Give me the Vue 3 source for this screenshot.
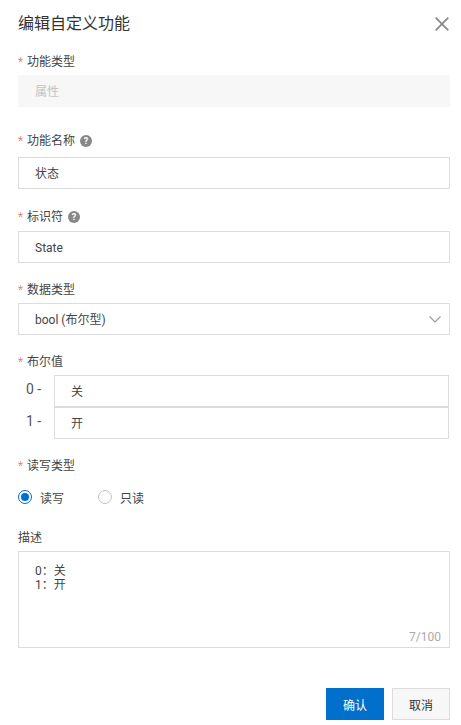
<template>
  <div class="dialog">
    <header class="dialog-header">
      <h2 class="dialog-title">编辑自定义功能</h2>
      <svg class="close-icon" width="14" height="14" viewBox="0 0 14 14">
        <path d="M0.7 0.7 L13.3 13.3 M13.3 0.7 L0.7 13.3" stroke="#8a8a8a" stroke-width="1.8" fill="none" />
      </svg>
    </header>

    <div class="form-item type-item">
      <label class="form-label"><span class="req">*</span>功能类型</label>
      <div class="input disabled">属性</div>
    </div>

    <div class="form-item name-item">
      <label class="form-label">
        <span class="req">*</span>功能名称
        <span class="help">?</span>
      </label>
      <div class="input">状态</div>
    </div>

    <div class="form-item id-item">
      <label class="form-label">
        <span class="req">*</span>标识符
        <span class="help">?</span>
      </label>
      <div class="input">State</div>
    </div>

    <div class="form-item">
      <label class="form-label"><span class="req">*</span>数据类型</label>
      <div class="input select">
        <span class="select-value">bool (布尔型)</span>
        <svg width="12" height="7" viewBox="0 0 12 7">
          <path d="M0.5 0.5 L6 6 L11.5 0.5" stroke="#999" stroke-width="1.1" fill="none" />
        </svg>
      </div>
    </div>

    <div class="form-item">
      <label class="form-label"><span class="req">*</span>布尔值</label>
      <div v-for="row in boolRows" :key="row.value" class="bool-row">
        <span class="bool-key">{{ row.value }} -</span>
        <div class="input bool-input">{{ row.label }}</div>
      </div>
    </div>

    <div class="form-item rw-item">
      <label class="form-label"><span class="req">*</span>读写类型</label>
      <div class="radio-group">
        <span class="radio checked"><i class="radio-dot"></i></span>
        <span class="radio-text">读写</span>
        <span class="radio"></span>
        <span class="radio-text">只读</span>
      </div>
    </div>

    <div class="form-item">
      <label class="form-label">描述</label>
      <div class="textarea">
        <div>0：关</div>
        <div>1：开</div>
        <span class="counter">7/100</span>
      </div>
    </div>

    <footer class="dialog-footer">
      <button class="btn primary">确认</button>
      <button class="btn">取消</button>
    </footer>
  </div>
</template>

<script setup>
const boolRows = [
  { value: 0, label: '关' },
  { value: 1, label: '开' }
]
</script>

<style>
html, body {
  background: #fff;
}
</style>

<style scoped>
.dialog {
  width: 461px;
  height: 725px;
  box-sizing: border-box;
  padding: 14px 11px 0 18px;
  background: #fff;
  color: #333;
  font-family: Roboto, "Noto Sans CJK SC", sans-serif;
  font-size: 12px;
  overflow: hidden;
}

.dialog-header {
  display: flex;
  justify-content: space-between;
  align-items: center;
  height: 20px;
  margin-bottom: 18px;
}

.dialog-title {
  margin: 0;
  font-size: 16px;
  font-weight: 400;
  line-height: 20px;
}

.close-icon {
  display: block;
  margin-right: 1px;
}

.form-item {
  margin-bottom: 17px;
}

.type-item {
  margin-bottom: 24px;
}

.name-item {
  margin-bottom: 18px;
}

.rw-item {
  margin-bottom: 13px;
}

.form-label {
  display: flex;
  align-items: center;
  height: 20px;
  margin-bottom: 3px;
  line-height: 20px;
  color: #444;
}

.name-item .form-label {
  margin-bottom: 6px;
}

.id-item .form-label {
  margin-bottom: 4px;
}

.req {
  width: 9px;
  flex: none;
  color: #d9686a;
  font-weight: 300;
}

.help {
  width: 12px;
  height: 12px;
  margin-left: 5px;
  border-radius: 50%;
  background: #888;
  color: #fff;
  font-size: 9px;
  font-weight: 700;
  line-height: 12px;
  text-align: center;
}

.input {
  height: 32px;
  box-sizing: border-box;
  padding: 0 16px;
  border: 1px solid #dcdcdc;
  line-height: 33px;
  color: #444;
}

.input.disabled {
  border-color: #f7f7f7;
  background: #f7f7f7;
  color: #c4c4c4;
}

.select {
  display: flex;
  justify-content: space-between;
  align-items: center;
  padding-right: 8px;
}

.select-value {
  padding-top: 3px;
}

.bool-row {
  display: flex;
  align-items: flex-start;
  padding-right: 1px;
}

.bool-key {
  width: 36px;
  flex: none;
  padding-left: 8px;
  box-sizing: border-box;
  line-height: 28px;
  font-size: 14px;
  color: #555;
}

.bool-input {
  flex: 1;
  line-height: 32px;
}

.radio-group {
  display: flex;
  align-items: center;
  height: 36px;
}

.radio {
  display: flex;
  align-items: center;
  justify-content: center;
  width: 14px;
  height: 14px;
  box-sizing: border-box;
  border: 1px solid #c4c4c4;
  border-radius: 50%;
}

.radio.checked {
  border-color: #0070cc;
}

.radio-dot {
  width: 8px;
  height: 8px;
  border-radius: 50%;
  background: #0070cc;
}

.radio-text {
  margin-left: 8px;
  margin-right: 34px;
  color: #444;
}

.textarea {
  position: relative;
  height: 97px;
  box-sizing: border-box;
  padding: 12px 16px;
  border: 1px solid #dcdcdc;
  line-height: 14px;
  color: #444;
}

.counter {
  position: absolute;
  right: 8px;
  bottom: 3px;
  color: #aaa;
}

.dialog-footer {
  display: flex;
  justify-content: flex-end;
  gap: 8px;
  margin-top: 40px;
}

.btn {
  width: 58px;
  height: 32px;
  padding: 0;
  border: 1px solid #dcdcdc;
  background: #f7f7f7;
  color: #333;
  font-family: inherit;
  font-size: 12px;
}

.btn.primary {
  border-color: #0070cc;
  background: #0070cc;
  color: #fff;
}
</style>
